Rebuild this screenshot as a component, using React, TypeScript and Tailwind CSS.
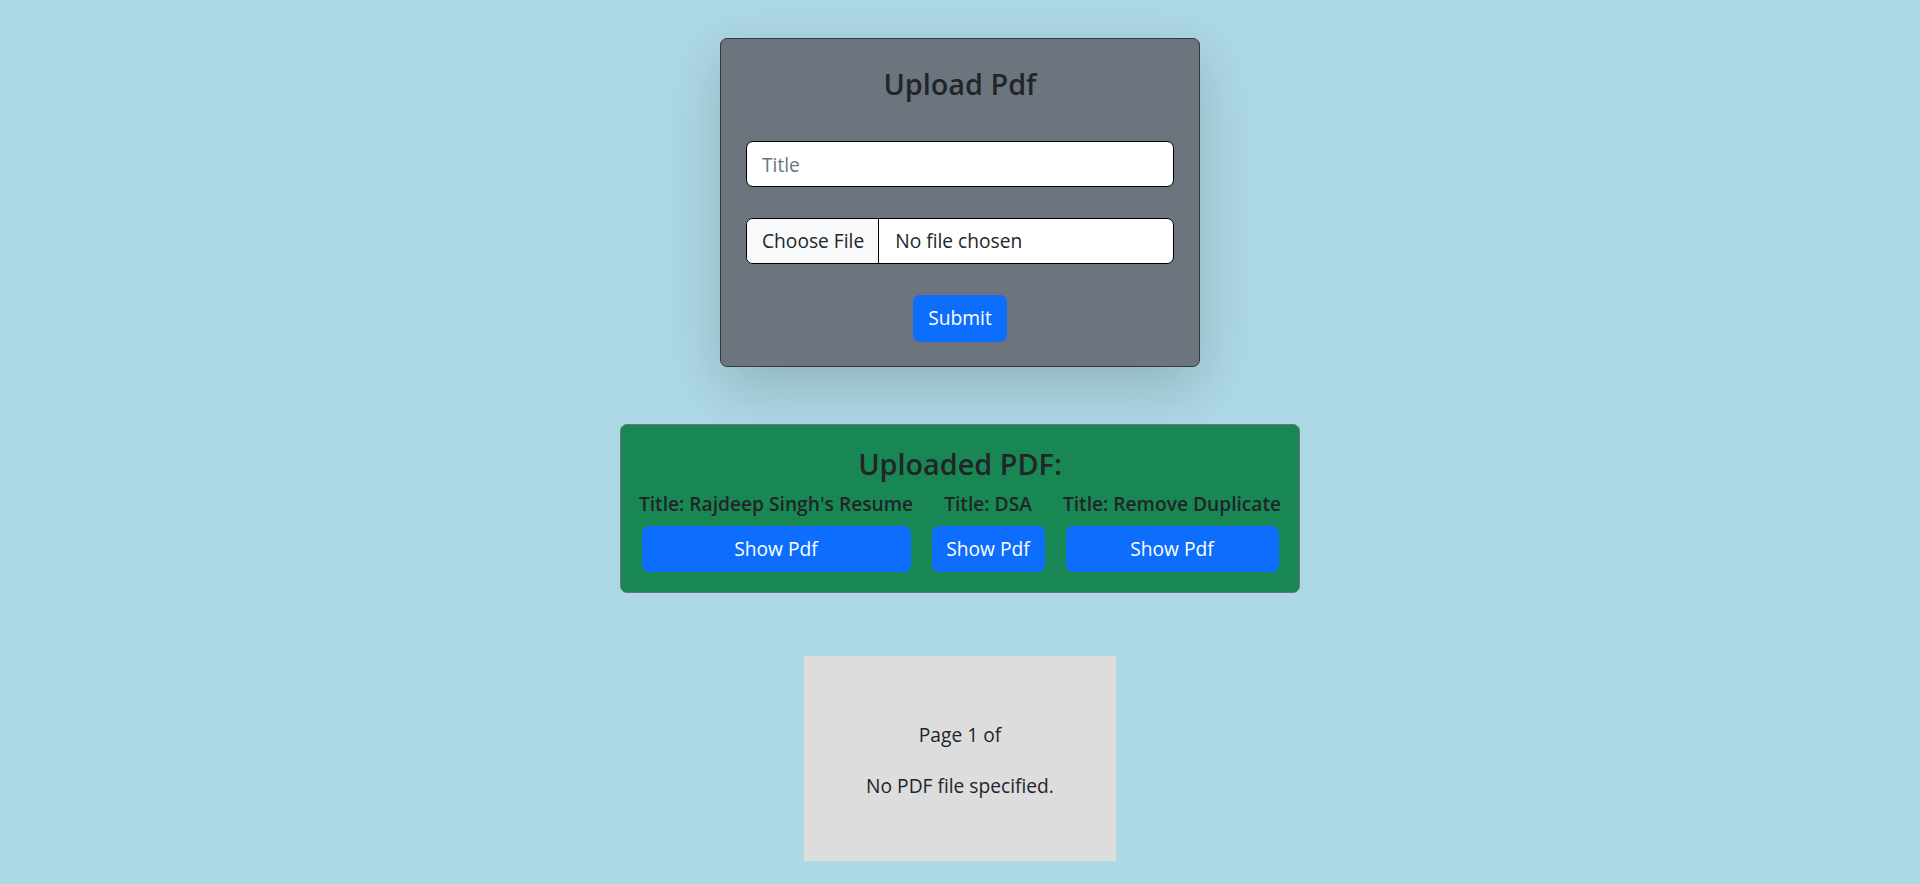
import { useState } from "react";

const font = { fontFamily: '"Open Sans", "Liberation Sans", sans-serif' };

type PdfItem = { id: number; title: string; width: string };

const pdfs: PdfItem[] = [
  { id: 1, title: "Rajdeep Singh's Resume", width: "w-[269px]" },
  { id: 2, title: "DSA", width: "w-[113px]" },
  { id: 3, title: "Remove Duplicate", width: "w-[213px]" },
];

export default function App() {
  const [title, setTitle] = useState("");

  return (
    <div
      className="flex min-h-screen flex-col items-center bg-[#add8e6] text-[#212529]"
      style={font}
    >
      {/* upload form */}
      <form
        className="mt-[38px] flex w-[480px] flex-col items-center rounded-[7px] border border-[#343a40] bg-[#6c757d] px-[25px] pb-[24px] pt-[27px] shadow-[0_19px_58px_rgba(0,0,0,0.175)]"
        onSubmit={(event) => event.preventDefault()}
      >
        <h4 className="text-[28.8px] font-semibold leading-[35px]">Upload Pdf</h4>
        <input
          type="text"
          placeholder="Title"
          value={title}
          onChange={(event) => setTitle(event.target.value)}
          className="mt-[40px] h-[46px] w-full rounded-[7px] border border-black bg-white px-[15px] text-[19.2px] text-[#212529] outline-none placeholder:text-[#6c757d]"
        />
        <label className="mt-[31px] flex h-[46px] w-full cursor-pointer overflow-hidden rounded-[7px] border border-black bg-white text-[19.2px]">
          <span className="flex items-center border-r border-black bg-[#f8f9fa] pl-[15px] pr-[14px] text-[#212529]">
            Choose File
          </span>
          <span className="flex items-center pl-[16px] text-[#212529]">No file chosen</span>
          <input type="file" className="hidden" />
        </label>
        <button
          type="submit"
          className="mt-[31px] h-[47px] w-[94px] rounded-[7px] bg-[#0d6efd] text-[19.2px] text-white"
        >
          Submit
        </button>
      </form>

      {/* uploaded list */}
      <div className="mt-[57px] flex w-[680px] flex-col items-center rounded-[7px] border border-[#6c757d] bg-[#198754] px-[20px] pb-[20px] pt-[22px]">
        <h4 className="text-[28.8px] font-semibold leading-[34px]">Uploaded PDF:</h4>
        <div className="mt-[11px] flex gap-[21px]">
          {pdfs.map((pdf) => (
            <div key={pdf.id} className={`flex flex-col items-center ${pdf.width}`}>
              <h6 className="whitespace-nowrap text-[19.2px] font-semibold leading-[23px]">
                Title: {pdf.title}
              </h6>
              <button className="mt-[11px] h-[46px] w-full rounded-[7px] bg-[#0d6efd] text-[19.2px] text-white">
                Show Pdf
              </button>
            </div>
          ))}
        </div>
      </div>

      {/* pdf preview */}
      <div className="mt-[63px] flex h-[205px] w-[312px] flex-col items-center gap-[22px] bg-[#dddddd] pt-[65px] text-[19.2px] leading-[28.8px]">
        <p>Page 1 of</p>
        <p>No PDF file specified.</p>
      </div>
    </div>
  );
}
